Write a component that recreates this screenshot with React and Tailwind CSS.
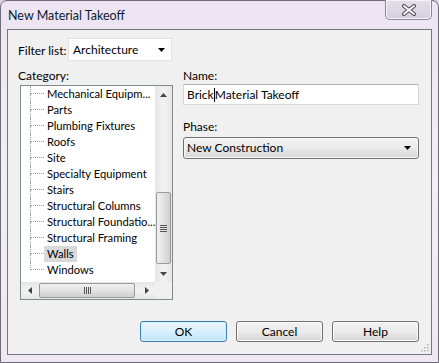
import React from "react";

const ui = { fontFamily: 'Lato, "Noto Sans", sans-serif' };

const categories = [
  "Mechanical Equipm...",
  "Parts",
  "Plumbing Fixtures",
  "Roofs",
  "Site",
  "Specialty Equipment",
  "Stairs",
  "Structural Columns",
  "Structural Foundatio...",
  "Structural Framing",
  "Walls",
  "Windows",
];

function Caret({ color = "#000" }) {
  return (
    <svg width="8" height="4" viewBox="0 0 8 4">
      <path d="M0 0h7L3.5 4z" fill={color} />
    </svg>
  );
}

function Tri({ dir }) {
  const d = {
    up: "M3.5 0L7 4H0z",
    down: "M0 0h7L3.5 4z",
    left: "M4 0v7L0 3.5z",
    right: "M0 0v7l4-3.5z",
  }[dir];
  const v = dir === "up" || dir === "down" ? "0 0 7 4" : "0 0 4 7";
  const w = dir === "up" || dir === "down" ? 7 : 4;
  const h = dir === "up" || dir === "down" ? 4 : 7;
  return (
    <svg width={w} height={h} viewBox={v}>
      <path d={d} fill="#444" />
    </svg>
  );
}

function TreeRow({ label, last, selected }) {
  return (
    <div className="flex h-[16px] items-stretch">
      <div className="ml-[9px] flex w-[14px] shrink-0 flex-col">
        <div className="h-[8px] border-b border-l border-dotted border-b-[#a0a0a0] border-l-[#a0a0a0]" />
        {!last && <div className="h-[8px] border-l border-dotted border-[#a0a0a0]" />}
      </div>
      <div
        className={`flex items-center whitespace-nowrap px-[3px] text-[11.2px] text-black ${
          selected ? "bg-[#d9d9d9]" : ""
        }`}
        style={ui}
      >
        {label}
      </div>
    </div>
  );
}

function Button({ children, primary }) {
  return (
    <div
      className={`flex h-[21px] w-[87px] items-center justify-center rounded-[3px] border text-[12px] text-black ${
        primary
          ? "border-[#3c7fb1] bg-gradient-to-b from-[#eaf6fd] via-[#d9f0fc] to-[#bee6fd] shadow-[inset_0_0_0_1px_#d8eefb]"
          : "border-[#707070] bg-gradient-to-b from-[#f2f2f2] via-[#ebebeb] to-[#d5d5d5] shadow-[inset_0_0_0_1px_#fcfcfc]"
      }`}
      style={ui}
    >
      {children}
    </div>
  );
}

export default function App() {
  return (
    <div className="h-[363px] w-[439px] overflow-hidden bg-[#d8d3dc]">
      <div className="flex h-[363px] w-[439px] flex-col rounded-t-[7px] border border-[#6e6a78] bg-gradient-to-b from-[#ece5f1] via-[#f3eef6] to-[#efe7f2] px-[6px] pb-[7px]">
        {/* Title bar */}
        <div className="flex h-[28px] items-start justify-between">
          <div className="pl-[1px] pt-[6px] text-[12.5px] text-[#0b1a33]" style={ui}>
            New Material Takeoff
          </div>
          <div className="-mt-[1px] flex h-[20px] w-[47px] items-center justify-center rounded-b-[5px] border border-t-0 border-[#8a8696] bg-gradient-to-b from-[#e4dfea] to-[#d6d0de] shadow-[inset_0_0_0_1px_#f4f2f7]">
            <svg width="16" height="12" viewBox="0 0 16 12">
              <path d="M3 2l10 8M13 2L3 10" stroke="#4a4a58" strokeWidth="4" strokeLinecap="round" />
              <path d="M3 2l10 8M13 2L3 10" stroke="#ffffff" strokeWidth="2" strokeLinecap="round" />
            </svg>
          </div>
        </div>

        {/* Client area */}
        <div className="flex flex-1 flex-col border border-[#777582] bg-[#f0f0f0] pl-[10px] pr-[12px] pt-[8px]">
          <div className="flex items-center">
            <div className="w-[50px] whitespace-nowrap pt-[2px] text-[12px] text-black" style={ui}>
              Filter list:
            </div>
            <div className="flex h-[23px] w-[104px] items-center justify-between border border-[#e2e2e2] bg-white pl-[4px] pr-[5px] text-[12px] text-black" style={ui}>
              <span>Architecture</span>
              <Caret />
            </div>
          </div>

          <div className="mt-[6px] flex">
            {/* Category */}
            <div className="flex w-[167px] flex-col">
              <div className="h-[18px] text-[12px] leading-[18px] text-black" style={ui}>
                Category:
              </div>
              <div className="ml-[2px] flex h-[215px] w-[153px] flex-col border border-[#828790] bg-white">
                <div className="flex h-[196px]">
                  <div className="w-[134px] overflow-hidden">
                    {categories.map((c, i) => (
                      <TreeRow
                        key={c}
                        label={c}
                        last={i === categories.length - 1}
                        selected={c === "Walls"}
                      />
                    ))}
                  </div>
                  {/* vertical scrollbar */}
                  <div className="flex w-[17px] flex-col bg-gradient-to-r from-[#e6e6e6] via-[#f2f2f2] to-[#e6e6e6]">
                    <div className="flex h-[17px] items-center justify-center">
                      <Tri dir="up" />
                    </div>
                    <div className="flex-1" />
                    <div className="mx-[1px] mb-[1px] flex h-[72px] items-center justify-center rounded-[2px] border border-[#9a9a9a] bg-gradient-to-r from-[#f0f0f0] via-[#e2e2e2] to-[#cfcfcf]">
                      <div className="flex flex-col gap-[1px]">
                        <div className="h-[1px] w-[7px] bg-[#555]" />
                        <div className="h-[1px] w-[7px] bg-[#555]" />
                        <div className="h-[1px] w-[7px] bg-[#555]" />
                        <div className="h-[1px] w-[7px] bg-[#555]" />
                      </div>
                    </div>
                    <div className="flex h-[17px] items-center justify-center">
                      <Tri dir="down" />
                    </div>
                  </div>
                </div>
                {/* horizontal scrollbar */}
                <div className="flex h-[17px]">
                  <div className="flex w-[134px] items-center bg-gradient-to-b from-[#e6e6e6] via-[#f2f2f2] to-[#e6e6e6]">
                    <div className="flex h-[17px] w-[17px] items-center justify-center">
                      <Tri dir="left" />
                    </div>
                    <div className="ml-[1px] flex h-[15px] w-[96px] items-center justify-center gap-[1px] rounded-[2px] border border-[#9a9a9a] bg-gradient-to-b from-[#f0f0f0] via-[#e2e2e2] to-[#cfcfcf]">
                      <div className="h-[7px] w-[1px] bg-[#555]" />
                      <div className="h-[7px] w-[1px] bg-[#555]" />
                      <div className="h-[7px] w-[1px] bg-[#555]" />
                      <div className="h-[7px] w-[1px] bg-[#555]" />
                    </div>
                    <div className="flex-1" />
                    <div className="flex h-[17px] w-[17px] items-center justify-center">
                      <Tri dir="right" />
                    </div>
                  </div>
                  <div className="w-[17px] bg-[#f0f0f0]" />
                </div>
              </div>
            </div>

            {/* Right column */}
            <div className="flex flex-col">
              <div className="h-[17px] text-[12px] leading-[18px] text-black" style={ui}>
                Name:
              </div>
              <div className="flex h-[21px] w-[236px] items-center border border-[#d5d7db] border-t-[#abadb3] bg-white pl-[3px] text-[12px] text-black" style={ui}>
                <span>Brick</span>
                <span className="h-[14px] w-[1px] bg-black" />
                <span>Material Takeoff</span>
              </div>
              <div className="mt-[14px] h-[18px] text-[12px] leading-[16px] text-black" style={ui}>
                Phase:
              </div>
              <div className="flex h-[22px] w-[236px] items-center justify-between rounded-[3px] border border-[#707070] bg-gradient-to-b from-[#f2f2f2] via-[#ebebeb] to-[#d5d5d5] pl-[3px] pr-[6px] text-[12px] text-black shadow-[inset_0_0_0_1px_#fafafa]" style={ui}>
                <span>New Construction</span>
                <Caret />
              </div>
            </div>
          </div>

          <div className="mt-[21px] flex justify-end gap-[9px]">
            <Button primary>OK</Button>
            <Button>Cancel</Button>
            <Button>Help</Button>
          </div>
          <div className="-mr-[10px] flex flex-1 items-end justify-end pb-[2px]">
            <svg width="8" height="8" viewBox="0 0 8 8">
              {[
                [6, 0],
                [6, 3],
                [3, 3],
                [6, 6],
                [3, 6],
                [0, 6],
              ].map(([x, y], i) => (
                <rect key={i} x={x} y={y} width="1.5" height="1.5" fill="#b0b0b0" />
              ))}
            </svg>
          </div>
        </div>
      </div>
    </div>
  );
}
